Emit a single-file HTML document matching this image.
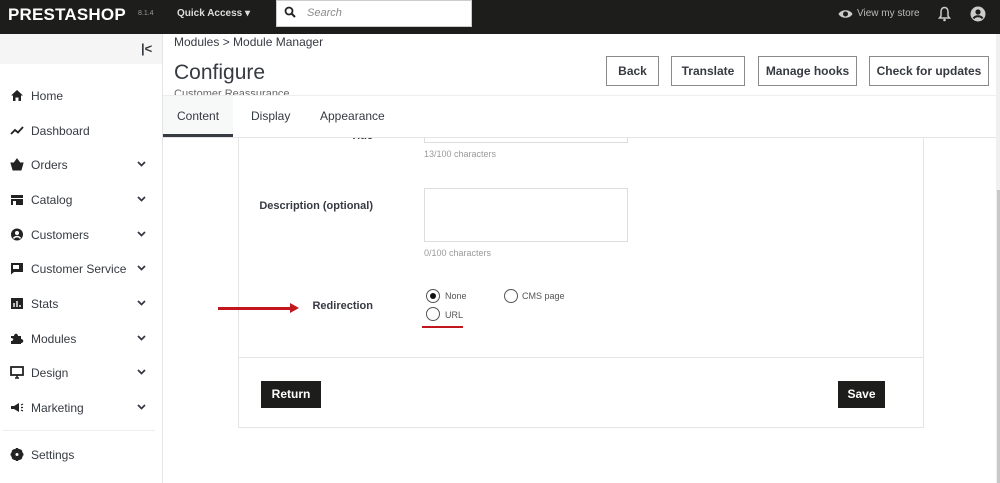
<!DOCTYPE html>
<html><head><meta charset="utf-8"><style>
*{box-sizing:border-box;margin:0;padding:0}
body{width:1000px;height:483px;overflow:hidden;background:#fff;font-family:"Liberation Sans",sans-serif;color:#363a41;position:relative}
.a{position:absolute}
.top{left:0;top:0;width:1000px;height:34px;background:#1d1d1b}
.side{left:0;top:34px;width:163px;height:449px;border-right:1px solid #e5e5e5;background:#fff}
.nav{left:10px;font-size:12px;color:#363a41;width:140px;height:14px}
.nav svg{position:absolute;left:0;top:0}
.nav span{position:absolute;left:21px;top:0}
.nav b{position:absolute;left:127px;top:3px;width:9px;height:6px}
.btn{top:56px;height:30px;border:1px solid #8a8a8a;background:#fff;font-size:12px;font-weight:bold;color:#363a41;text-align:center;line-height:28px}
.lbl{font-size:11px;font-weight:bold;color:#363a41;text-align:right}
.help{font-size:9px;color:#9a9a9a}
.rad{width:14px;height:14px;border:1px solid #555;border-radius:50%}
.dark{background:#1d1d1b;color:#fff;font-weight:bold;font-size:12px;text-align:center;line-height:27px;height:27px}
</style></head><body>
<svg width="0" height="0" style="position:absolute"><defs><symbol id="chev" viewBox="0 0 9 6"><path d="M1 1L4.5 4.5L8 1" stroke="#363a41" stroke-width="1.8" fill="none"/></symbol></defs></svg>
<div class="a top"></div>
<div class="a" style="left:8px;top:5px;color:#fff;font-weight:bold;font-size:17px;letter-spacing:0.2px">PRESTASHOP</div>
<div class="a" style="left:138px;top:10px;color:#999;font-size:7px">8.1.4</div>
<div class="a" style="left:177px;top:8px;color:#ddd;font-weight:bold;font-size:10px">Quick Access ▾</div>
<div class="a" style="left:276px;top:0;width:196px;height:27px;background:#fff;border:1px solid #ccc"></div>
<svg class="a" style="left:284px;top:6px" width="13" height="13" viewBox="0 0 13 13"><circle cx="5" cy="5" r="3.5" stroke="#222" stroke-width="1.8" fill="none"/><path d="M7.5 7.5L11 11" stroke="#222" stroke-width="2"/></svg>
<div class="a" style="left:307px;top:7px;color:#8a8a8a;font-style:italic;font-size:11px">Search</div>
<svg class="a" style="left:838px;top:8px" width="15" height="12" viewBox="0 0 15 12"><path d="M0.5 6C3 1 12 1 14.5 6C12 11 3 11 0.5 6Z" fill="#ccc"/><circle cx="7.5" cy="6" r="2.5" fill="#1d1d1b"/></svg>
<div class="a" style="left:857px;top:8px;color:#bbb;font-size:10px">View my store</div>
<svg class="a" style="left:938px;top:6px" width="13" height="16" viewBox="0 0 13 16"><path d="M6.5 1.5C3.8 1.5 3 4 3 6V10L1.5 12H11.5L10 10V6C10 4 9.2 1.5 6.5 1.5Z" fill="none" stroke="#ccc" stroke-width="1.5"/><circle cx="6.5" cy="14" r="1.3" fill="#ccc"/></svg>
<svg class="a" style="left:970px;top:6px" width="16" height="16" viewBox="0 0 16 16"><circle cx="8" cy="8" r="7.5" fill="#ccc"/><circle cx="8" cy="6" r="2.6" fill="#1d1d1b"/><path d="M3.5 12.5C5 9.5 11 9.5 12.5 12.5" stroke="#1d1d1b" stroke-width="2" fill="none"/></svg>

<div class="a side"></div>
<div class="a" style="left:0;top:34px;width:162px;height:30px;background:#f5f5f5"></div>
<div class="a" style="left:141px;top:41px;font-size:13px;font-weight:bold;color:#363a41">|&lt;</div>

<div class="a nav" style="top:89px"><svg width="14" height="13" viewBox="0 0 14 13"><path d="M7 1L1 6.5H3V12H5.5V8.5H8.5V12H11V6.5H13Z" fill="#222"/></svg><span>Home</span></div>
<div class="a nav" style="top:124px"><svg width="14" height="13" viewBox="0 0 14 13"><path d="M1 10L5 6L8 8.5L13 3" stroke="#222" stroke-width="1.8" fill="none"/></svg><span>Dashboard</span></div>
<div class="a nav" style="top:158px"><svg width="14" height="13" viewBox="0 0 14 13"><path d="M1 5H13L11 12H3Z M4 5L7 1L10 5" fill="#222" stroke="#222"/></svg><span>Orders</span><b><svg width="9" height="6"><use href="#chev"/></svg></b></div>
<div class="a nav" style="top:193px"><svg width="14" height="13" viewBox="0 0 14 13"><rect x="1" y="2" width="12" height="3" fill="#222"/><rect x="1" y="6" width="12" height="6" fill="#222"/><rect x="3" y="8" width="3" height="4" fill="#fff"/></svg><span>Catalog</span><b><svg width="9" height="6"><use href="#chev"/></svg></b></div>
<div class="a nav" style="top:228px"><svg width="14" height="13" viewBox="0 0 14 13"><circle cx="7" cy="6.5" r="6" fill="#222"/><circle cx="7" cy="5" r="2" fill="#fff"/><path d="M3.5 10.5C5 8 9 8 10.5 10.5" stroke="#fff" stroke-width="1.6" fill="none"/></svg><span>Customers</span><b><svg width="9" height="6"><use href="#chev"/></svg></b></div>
<div class="a nav" style="top:262px"><svg width="14" height="13" viewBox="0 0 14 13"><path d="M1 1H13V10H4L1 12.5Z" fill="#222"/><rect x="3" y="3" width="6" height="4" fill="#fff"/></svg><span>Customer Service</span><b><svg width="9" height="6"><use href="#chev"/></svg></b></div>
<div class="a nav" style="top:297px"><svg width="14" height="13" viewBox="0 0 14 13"><rect x="1" y="1" width="12" height="11" fill="#222"/><path d="M4 10V6M7 10V4M10 10V8" stroke="#fff" stroke-width="1.4"/></svg><span>Stats</span><b><svg width="9" height="6"><use href="#chev"/></svg></b></div>
<div class="a nav" style="top:332px"><svg width="14" height="13" viewBox="0 0 14 13"><path d="M1 4H4C4 1 8 1 8 4H11V7C14 7 14 11 11 11V12H1V9C4 9 4 6 1 6Z" fill="#222"/></svg><span>Modules</span><b><svg width="9" height="6"><use href="#chev"/></svg></b></div>
<div class="a nav" style="top:366px"><svg width="14" height="13" viewBox="0 0 14 13"><rect x="1" y="1" width="12" height="8" fill="none" stroke="#222" stroke-width="1.8"/><path d="M5 12H9M7 9V12" stroke="#222" stroke-width="1.6"/></svg><span>Design</span><b><svg width="9" height="6"><use href="#chev"/></svg></b></div>
<div class="a nav" style="top:401px"><svg width="14" height="13" viewBox="0 0 14 13"><path d="M1 5H4L9 2V11L4 8H1Z" fill="#222"/><path d="M11 4L13 3M11 6.5H13M11 9L13 10" stroke="#222" stroke-width="1.2"/></svg><span>Marketing</span><b><svg width="9" height="6"><use href="#chev"/></svg></b></div>
<div class="a" style="left:3px;top:430px;width:152px;height:1px;background:#eee"></div>
<div class="a nav" style="top:448px"><svg width="14" height="13" viewBox="0 0 14 13"><circle cx="7" cy="6.5" r="4.5" fill="none" stroke="#222" stroke-width="3"/><path d="M7 0V13M0.5 6.5H13.5M2.5 2L11.5 11M11.5 2L2.5 11" stroke="#222" stroke-width="2"/><circle cx="7" cy="6.5" r="1.5" fill="#fff"/></svg><span>Settings</span></div>

<div class="a" style="left:174px;top:35px;font-size:12px;color:#363a41">Modules &gt; Module Manager</div>
<div class="a" style="left:174px;top:61px;font-size:21px;color:#363a41">Configure</div>
<div class="a" style="left:174px;top:87px;height:8px;overflow:hidden;font-size:11px;color:#666;line-height:14px">Customer Reassurance</div>
<div class="a btn" style="left:606px;width:53px">Back</div>
<div class="a btn" style="left:671px;width:74px">Translate</div>
<div class="a btn" style="left:758px;width:99px">Manage hooks</div>
<div class="a btn" style="left:869px;width:120px">Check for updates</div>

<div class="a" style="left:163px;top:95px;width:833px;height:43px;border-top:1px solid #eee;border-bottom:1px solid #e5e5e5;background:#fff"></div>
<div class="a" style="left:163px;top:96px;width:70px;height:41px;background:#f7f8f8;border-bottom:3px solid #363a41"></div>
<div class="a" style="left:177px;top:109px;font-size:12px">Content</div>
<div class="a" style="left:251px;top:109px;font-size:12px">Display</div>
<div class="a" style="left:320px;top:109px;font-size:12px">Appearance</div>

<div class="a" style="left:238px;top:138px;width:686px;height:290px;border:1px solid #e5e5e5;border-top:none"></div>
<div class="a" style="left:238px;top:357px;width:686px;height:1px;background:#e5e5e5"></div>
<div class="a lbl" style="left:300px;top:138px;width:73px;height:5px;overflow:hidden"><span style="position:relative;top:-8px">Title</span></div>
<div class="a" style="left:424px;top:138px;width:204px;height:5px;border:1px solid #ddd;border-top:none"></div>
<div class="a help" style="left:424px;top:149px">13/100 characters</div>
<div class="a lbl" style="left:200px;top:200px;width:173px">Description (optional)</div>
<div class="a" style="left:424px;top:188px;width:204px;height:54px;border:1px solid #ddd"></div>
<div class="a help" style="left:424px;top:248px">0/100 characters</div>
<div class="a lbl" style="left:250px;top:300px;width:123px">Redirection</div>
<div class="a rad" style="left:426px;top:289px"></div><div class="a" style="left:430px;top:293px;width:6px;height:6px;border-radius:50%;background:#111"></div>
<div class="a help" style="left:445px;top:291px;color:#555">None</div>
<div class="a rad" style="left:504px;top:289px"></div>
<div class="a help" style="left:522px;top:291px;color:#555">CMS page</div>
<div class="a rad" style="left:426px;top:307px"></div>
<div class="a help" style="left:445px;top:310px;color:#555">URL</div>
<div class="a" style="left:218px;top:307px;width:74px;height:3px;background:#c0161c"></div>
<div class="a" style="left:290px;top:303px;width:0;height:0;border-left:9px solid #c0161c;border-top:5px solid transparent;border-bottom:5px solid transparent"></div>
<div class="a" style="left:422px;top:326px;width:41px;height:2px;background:#c0161c"></div>

<div class="a dark" style="left:261px;top:381px;width:60px">Return</div>
<div class="a dark" style="left:838px;top:381px;width:47px">Save</div>
<div class="a" style="left:996px;top:34px;width:4px;height:449px;background:#f0f0f0"></div>
<div class="a" style="left:997px;top:190px;width:3px;height:293px;background:#c8c8c8"></div>
</body></html>
